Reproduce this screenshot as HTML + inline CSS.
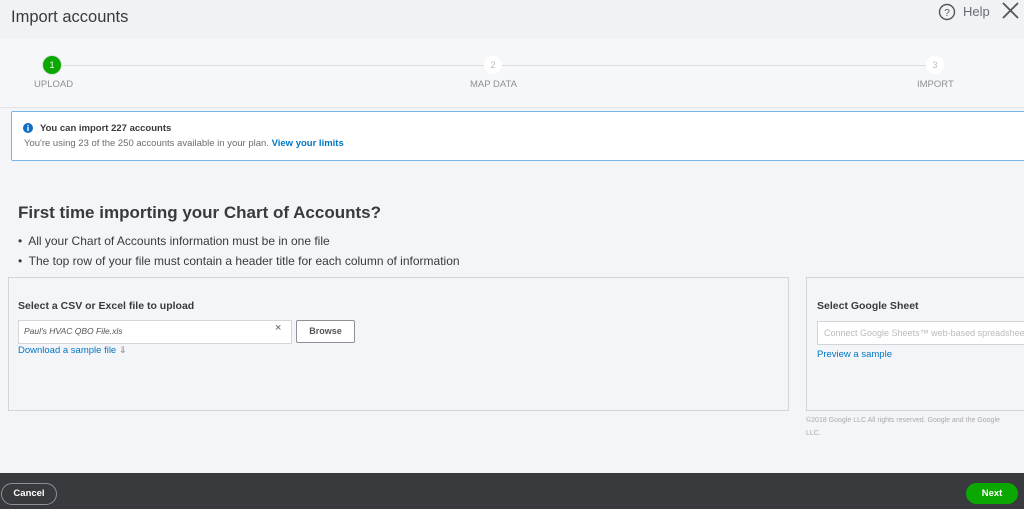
<!DOCTYPE html>
<html><head><style>
body{margin:0;width:1024px;height:509px;overflow:hidden;background:#f4f5f8;font-family:"Liberation Sans",sans-serif;position:relative;color:#393a3d}
.a{position:absolute}
.circ{position:absolute;width:18px;height:18px;border-radius:50%;background:#fff;color:#bbb;font-size:9px;text-align:center;line-height:18px}
.lbl{position:absolute;font-size:9.5px;color:#8d9096;top:79px}
a{color:#0077c5;text-decoration:none}
</style></head><body>
<div class="a" style="left:0;top:0;width:1024px;height:39px;background:#f1f2f5"></div>
<div class="a" style="left:11px;top:8px;font-size:16.5px;color:#393a3d">Import accounts</div>
<svg class="a" style="left:938px;top:3px" width="18" height="18" viewBox="0 0 18 18"><circle cx="9" cy="9" r="7.5" fill="none" stroke="#555" stroke-width="1.4"/><text x="9" y="13" font-size="10" text-anchor="middle" fill="#555" font-family="Liberation Sans">?</text></svg>
<div class="a" style="left:963px;top:4px;font-size:13px;color:#6b6c72">Help</div>
<svg class="a" style="left:1002px;top:2px" width="17" height="17" viewBox="0 0 17 17"><path d="M1 1L16 16M16 1L1 16" stroke="#555" stroke-width="1.8"/></svg>
<div class="a" style="left:0;top:39px;width:1024px;height:68px;background:#f6f7f9;border-bottom:1px solid #e3e4e7"></div>
<div class="a" style="left:52px;top:65px;width:883px;height:1px;background:#dcdde0"></div>
<div class="circ" style="left:43px;top:56px;background:#0aa800;color:#fff;box-shadow:0 0 0 1px #e0e0e0">1</div>
<div class="circ" style="left:484px;top:56px">2</div>
<div class="circ" style="left:926px;top:56px">3</div>
<div class="lbl" style="left:34px">UPLOAD</div>
<div class="lbl" style="left:470px">MAP DATA</div>
<div class="lbl" style="left:917px">IMPORT</div>
<div class="a" style="left:11px;top:111px;width:1020px;height:48px;background:#fff;border:1px solid #7ab4e6;border-radius:2px"></div>
<svg class="a" style="left:23px;top:123px" width="10" height="10"><circle cx="5" cy="5" r="5" fill="#0d6ec5"/><rect x="4.3" y="4" width="1.4" height="4" fill="#fff"/><rect x="4.3" y="2" width="1.4" height="1.3" fill="#fff"/></svg>
<div class="a" style="left:40px;top:123px;font-size:9.5px;font-weight:bold;color:#393a3d">You can import 227 accounts</div>
<div class="a" style="left:24px;top:138px;font-size:9.5px;color:#6b6c72">You're using 23 of the 250 accounts available in your plan. <a style="font-weight:bold">View your limits</a></div>
<div class="a" style="left:18px;top:203px;font-size:17px;font-weight:bold;color:#393a3d">First time importing your Chart of Accounts?</div>
<div class="a" style="left:18px;top:231px;font-size:12px;line-height:20px;color:#393a3d">•&nbsp; All your Chart of Accounts information must be in one file<br>•&nbsp; The top row of your file must contain a header title for each column of information</div>
<div class="a" style="left:8px;top:277px;width:779px;height:132px;border:1px solid #d4d5d8"></div>
<div class="a" style="left:18px;top:300px;font-size:10.5px;font-weight:bold">Select a CSV or Excel file to upload</div>
<div class="a" style="left:18px;top:320px;width:272px;height:22px;background:#fff;border:1px solid #d4d5d8"></div>
<div class="a" style="left:24px;top:326px;font-size:8.5px;font-style:italic;color:#555">Paul's HVAC QBO File.xls</div>
<div class="a" style="left:275px;top:322px;font-size:11px;color:#555">×</div>
<div class="a" style="left:296px;top:320px;width:57px;height:21px;background:#fff;border:1px solid #8d9096;border-radius:2px;font-size:9px;font-weight:bold;text-align:center;line-height:21px;color:#555">Browse</div>
<div class="a" style="left:18px;top:345px;font-size:9.5px"><a>Download a sample file</a> <span style="color:#888">⇓</span></div>
<div class="a" style="left:806px;top:277px;width:230px;height:132px;border:1px solid #d4d5d8"></div>
<div class="a" style="left:817px;top:300px;font-size:10.5px;font-weight:bold">Select Google Sheet</div>
<div class="a" style="left:817px;top:321px;width:220px;height:22px;background:#fff;border:1px solid #d4d5d8;font-size:9px;color:#bbb;line-height:22px;padding-left:6px;white-space:nowrap;overflow:hidden">Connect Google Sheets™ web-based spreadsheet</div>
<div class="a" style="left:817px;top:349px;font-size:9.5px"><a>Preview a sample</a></div>
<div class="a" style="left:806px;top:414px;font-size:7px;line-height:13px;color:#aaa;white-space:nowrap">©2018 Google LLC All rights reserved. Google and the Google<br>LLC.</div>
<div class="a" style="left:0;top:473px;width:1024px;height:36px;background:#393a3d"></div>
<div class="a" style="left:1px;top:483px;width:54px;height:20px;border:1px solid #8d9096;border-radius:11px;color:#fff;font-size:9.5px;font-weight:bold;text-align:center;line-height:20px">Cancel</div>
<div class="a" style="left:966px;top:483px;width:52px;height:21px;background:#0aa800;border-radius:11px;color:#fff;font-size:9.5px;font-weight:bold;text-align:center;line-height:21px">Next</div>
</body></html>
